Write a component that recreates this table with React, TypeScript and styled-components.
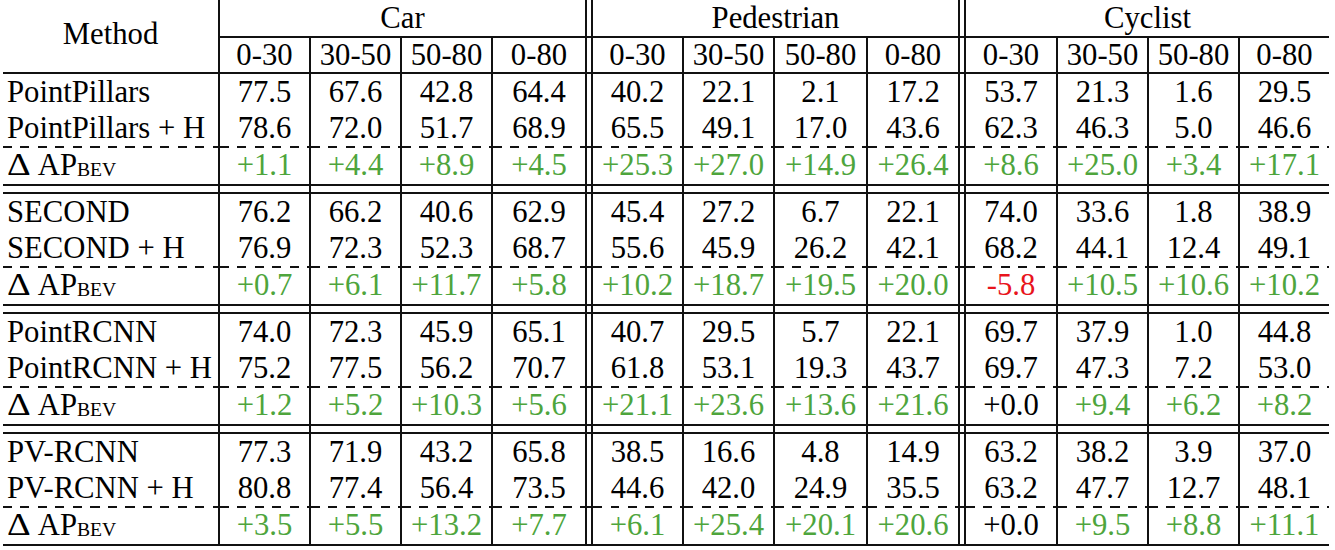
import React from "react";
import styled, { createGlobalStyle, css } from "styled-components";

const COLS =
  "215px 91px 91px 91px 94px 6px 91px 91px 93px 92px 6px 92px 91px 91px 91px";
const LINE = "2px solid #111";
const GREEN = "#4ea53c";
const RED = "#e8141c";

const serif = css`
  font-family: "Liberation Serif", Tinos, "Times New Roman", "Nimbus Roman", serif;
  font-size: 30.7px;
  line-height: 1;
`;

const Global = createGlobalStyle`
  html, body { margin: 0; padding: 0; background: #fff; }
  body { font-family: "Liberation Serif", Tinos, "Times New Roman", serif; color: #000; }
`;

const Table = styled.div`
  ${serif}
  margin-left: 3px;
  width: 1326px;
`;

const Head = styled.div`
  display: grid;
  grid-template-columns: ${COLS};
  grid-template-rows: 38px 34px;
  border-bottom: ${LINE};
`;

const MethodHead = styled.div`
  ${serif}
  grid-column: 1;
  grid-row: 1 / span 2;
  display: flex;
  align-items: center;
  justify-content: center;
  padding-bottom: 4px;
`;

const GroupHead = styled.div<{ $col: number }>`
  ${serif}
  grid-column: ${(p) => p.$col} / span 4;
  grid-row: 1;
  display: flex;
  align-items: center;
  justify-content: center;
  border-left: ${LINE};
  border-bottom: ${LINE};
`;

const SepHead = styled.div<{ $col: number; $row: number }>`
  grid-column: ${(p) => p.$col};
  grid-row: ${(p) => p.$row};
  border-left: ${LINE};
  border-bottom: ${(p) => (p.$row === 1 ? LINE : "none")};
`;

const SubHead = styled.div<{ $col: number }>`
  ${serif}
  grid-column: ${(p) => p.$col};
  grid-row: 2;
  display: flex;
  align-items: center;
  justify-content: center;
  border-left: ${LINE};
`;

const Row = styled.div<{ $h: number; $rule?: "solid" | "none" }>`
  display: grid;
  grid-template-columns: ${COLS};
  height: ${(p) => p.$h}px;
  box-sizing: border-box;
  border-bottom: ${(p) => (p.$rule === "solid" ? LINE : "none")};
`;

const dash = `repeating-linear-gradient(90deg, #111 0 9px, transparent 9px 17.5px) left bottom / 100% 2px no-repeat`;

const Cell = styled.div<{
  $left?: boolean;
  $dash?: boolean;
  $tone?: "black" | "green" | "red";
}>`
  ${serif}
  display: flex;
  align-items: center;
  justify-content: center;
  box-sizing: border-box;
  border-left: ${(p) => (p.$left ? LINE : "none")};
  padding-bottom: ${(p) => (p.$dash ? "3px" : "1px")};
  background: ${(p) => (p.$dash ? dash : "none")};
  color: ${(p) => (p.$tone === "green" ? GREEN : p.$tone === "red" ? RED : "#000")};
`;

const NameCell = styled(Cell)`
  justify-content: flex-start;
  padding-left: 4px;
  white-space: nowrap;
`;

const Delta = styled.span`
  display: inline-block;
  transform: scaleX(1.2);
  transform-origin: left center;
  margin-right: 11px;
`;

const Sub = styled.span`
  font-size: 0.64em;
  position: relative;
  top: 0.2em;
`;

type Group = {
  name: string;
  base: string[];
  h: string[];
  d: string[];
};

const groups: Group[] = [
  {
    name: "PointPillars",
    base: ["77.5", "67.6", "42.8", "64.4", "40.2", "22.1", "2.1", "17.2", "53.7", "21.3", "1.6", "29.5"],
    h: ["78.6", "72.0", "51.7", "68.9", "65.5", "49.1", "17.0", "43.6", "62.3", "46.3", "5.0", "46.6"],
    d: ["+1.1", "+4.4", "+8.9", "+4.5", "+25.3", "+27.0", "+14.9", "+26.4", "+8.6", "+25.0", "+3.4", "+17.1"],
  },
  {
    name: "SECOND",
    base: ["76.2", "66.2", "40.6", "62.9", "45.4", "27.2", "6.7", "22.1", "74.0", "33.6", "1.8", "38.9"],
    h: ["76.9", "72.3", "52.3", "68.7", "55.6", "45.9", "26.2", "42.1", "68.2", "44.1", "12.4", "49.1"],
    d: ["+0.7", "+6.1", "+11.7", "+5.8", "+10.2", "+18.7", "+19.5", "+20.0", "-5.8", "+10.5", "+10.6", "+10.2"],
  },
  {
    name: "PointRCNN",
    base: ["74.0", "72.3", "45.9", "65.1", "40.7", "29.5", "5.7", "22.1", "69.7", "37.9", "1.0", "44.8"],
    h: ["75.2", "77.5", "56.2", "70.7", "61.8", "53.1", "19.3", "43.7", "69.7", "47.3", "7.2", "53.0"],
    d: ["+1.2", "+5.2", "+10.3", "+5.6", "+21.1", "+23.6", "+13.6", "+21.6", "+0.0", "+9.4", "+6.2", "+8.2"],
  },
  {
    name: "PV-RCNN",
    base: ["77.3", "71.9", "43.2", "65.8", "38.5", "16.6", "4.8", "14.9", "63.2", "38.2", "3.9", "37.0"],
    h: ["80.8", "77.4", "56.4", "73.5", "44.6", "42.0", "24.9", "35.5", "63.2", "47.7", "12.7", "48.1"],
    d: ["+3.5", "+5.5", "+13.2", "+7.7", "+6.1", "+25.4", "+20.1", "+20.6", "+0.0", "+9.5", "+8.8", "+11.1"],
  },
];

const classes = ["Car", "Pedestrian", "Cyclist"];
const ranges = ["0-30", "30-50", "50-80", "0-80"];

const toneOf = (v: string): "black" | "green" | "red" =>
  v.startsWith("-") ? "red" : v === "+0.0" ? "black" : v.startsWith("+") ? "green" : "black";

function ValueCells({ values, dashed, colored }: { values: string[]; dashed?: boolean; colored?: boolean }) {
  const out: React.ReactNode[] = [];
  values.forEach((v, i) => {
    if (i > 0 && i % 4 === 0) out.push(<Cell key={`s${i}`} $left $dash={dashed} />);
    out.push(
      <Cell key={i} $left $dash={dashed} $tone={colored ? toneOf(v) : "black"}>
        {v}
      </Cell>
    );
  });
  return <>{out}</>;
}

function Gap() {
  const cells: React.ReactNode[] = [<Cell key="m" />];
  for (let i = 1; i < 15; i++) cells.push(<Cell key={i} $left />);
  return (
    <Row $h={8} $rule="solid">
      {cells}
    </Row>
  );
}

export default function App() {
  return (
    <>
      <Global />
      <Table>
        <Head>
          <MethodHead>Method</MethodHead>
          <GroupHead $col={2}>{classes[0]}</GroupHead>
          <SepHead $col={6} $row={1} />
          <GroupHead $col={7}>{classes[1]}</GroupHead>
          <SepHead $col={11} $row={1} />
          <GroupHead $col={12}>{classes[2]}</GroupHead>
          {[0, 1, 2].map((g) => (
            <React.Fragment key={g}>
              {g > 0 && <SepHead $col={g === 1 ? 6 : 11} $row={2} />}
              {ranges.map((r, i) => (
                <SubHead key={r} $col={2 + g * 5 + i}>
                  {r}
                </SubHead>
              ))}
            </React.Fragment>
          ))}
        </Head>
        {groups.map((g, gi) => (
          <React.Fragment key={g.name}>
            <Row $h={37}>
              <NameCell>{g.name}</NameCell>
              <ValueCells values={g.base} />
            </Row>
            <Row $h={37}>
              <NameCell $dash>{g.name} + H</NameCell>
              <ValueCells values={g.h} dashed />
            </Row>
            <Row $h={38} $rule="solid">
              <NameCell>
                <Delta>Δ</Delta>AP<Sub>BEV</Sub>
              </NameCell>
              <ValueCells values={g.d} colored />
            </Row>
            {gi < groups.length - 1 && <Gap />}
          </React.Fragment>
        ))}
      </Table>
    </>
  );
}
